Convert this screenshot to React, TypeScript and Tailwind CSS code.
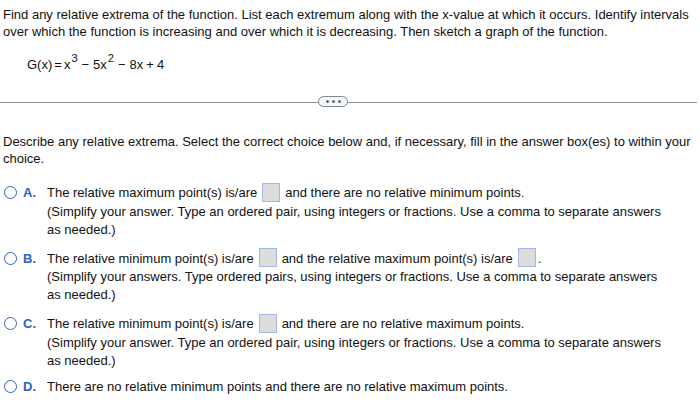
import React from 'react';

type Choice = {
  letter: string;
  lines: React.ReactNode;
  hint?: string;
};

function AnswerBox() {
  return (
    <span className="inline-block align-middle w-[18px] h-[19px] mx-[5px] bg-[#dddddd] border border-[#a3b8e3] -mt-[3px]" />
  );
}

function Radio() {
  return (
    <span className="inline-block w-[13px] h-[13px] rounded-full border-[1.5px] border-[#2f62c4] bg-white" />
  );
}

const choices: Choice[] = [
  {
    letter: 'A.',
    lines: (
      <>
        The relative maximum point(s) is/are
        <AnswerBox />
        and there are no relative minimum points.
      </>
    ),
    hint: '(Simplify your answer. Type an ordered pair, using integers or fractions. Use a comma to separate answers as needed.)',
  },
  {
    letter: 'B.',
    lines: (
      <>
        The relative minimum point(s) is/are
        <AnswerBox />
        and the relative maximum point(s) is/are
        <AnswerBox />
        <span className="-ml-[3px]">.</span>
      </>
    ),
    hint: '(Simplify your answers. Type ordered pairs, using integers or fractions. Use a comma to separate answers as needed.)',
  },
  {
    letter: 'C.',
    lines: (
      <>
        The relative minimum point(s) is/are
        <AnswerBox />
        and there are no relative maximum points.
      </>
    ),
    hint: '(Simplify your answer. Type an ordered pair, using integers or fractions. Use a comma to separate answers as needed.)',
  },
  {
    letter: 'D.',
    lines: <>There are no relative minimum points and there are no relative maximum points.</>,
  },
];

export default function App() {
  return (
    <div className="w-[700px] h-[418px] bg-white text-[#111111] text-[13px] leading-[17px] font-['Liberation_Sans',Arial,sans-serif] overflow-hidden">
      <div className="px-[3px] pt-[6px]">
        <p>
          Find any relative extrema of the function. List each extremum along with the x-value at which it occurs. Identify intervals over which the function is increasing and over which it is decreasing. Then sketch a graph of the function.
        </p>
        <div className="pl-[24px] pt-[16px] whitespace-nowrap">
          G(x)<span className="mx-[2px]">=</span>x<sup className="text-[11px] -top-[7px] ml-[1px]">3</sup>
          <span className="mx-[4px]">−</span>5x<sup className="text-[11px] -top-[7px] ml-[1px]">2</sup>
          <span className="mx-[4px]">−</span>8x<span className="mx-[3px]">+</span>4
        </div>
      </div>

      <div className="relative mt-[23px] h-[12px] flex items-center">
        <div className="w-[697px] h-px bg-[#8c96a0]" />
        <div className="absolute left-[318px] top-0 w-[30px] h-[11px] rounded-full border border-[#7a8794] bg-[#f4f6f8] flex items-center justify-center gap-[3px]">
          <span className="w-[3px] h-[3px] rounded-full bg-[#5d6874]" />
          <span className="w-[3px] h-[3px] rounded-full bg-[#5d6874]" />
          <span className="w-[3px] h-[3px] rounded-full bg-[#5d6874]" />
        </div>
      </div>

      <div className="px-[3px] pt-[25px]">
        <p>
          Describe any relative extrema. Select the correct choice below and, if necessary, fill in the answer box(es) to within your choice.
        </p>

        <div className="mt-[17px] flex flex-col gap-[11px]">
          {choices.map((c) => (
            <div key={c.letter} className={`flex items-start ${c.hint ? '' : '-mt-[3px]'}`}>
              <div className="w-[44px] shrink-0 flex items-center gap-[6px] pl-[1px] h-[17px]">
                <Radio />
                <span className="text-[#2f62c4] font-bold">{c.letter}</span>
              </div>
              <div className="flex-1 pr-[30px]">
                <div>{c.lines}</div>
                {c.hint && <div className="mt-[1px] leading-[18px]">{c.hint}</div>}
              </div>
            </div>
          ))}
        </div>
      </div>
    </div>
  );
}
